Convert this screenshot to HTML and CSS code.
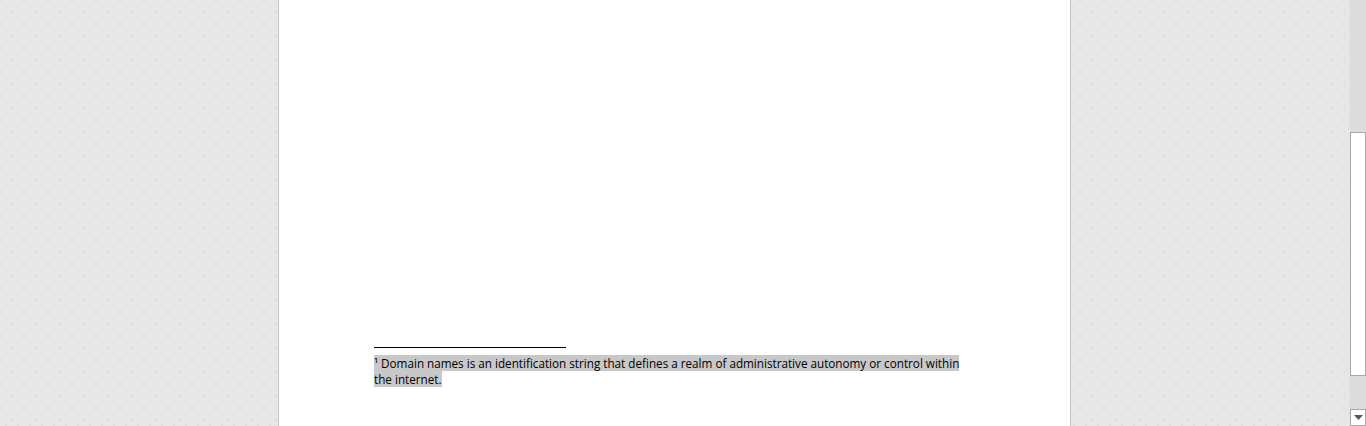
FILE: index.html
```html
<!DOCTYPE html>
<html>
<head>
<meta charset="utf-8">
<link rel="stylesheet" href="styles.css">
</head>
<body>
<div class="workspace">
  <div class="gutter gutter-left"></div>
  <div class="page">
    <div class="footnotes">
      <div class="separator"></div>
      <p class="footnote"><span class="hl">¹ Domain names is an identification string that defines a realm of administrative autonomy or control within the internet.</span></p>
    </div>
  </div>
  <div class="gutter gutter-right"></div>
  <div class="scrollbar">
    <div class="track-top"></div>
    <div class="thumb"></div>
    <div class="track-bottom"></div>
    <div class="btn-down"><svg width="9" height="5" viewBox="0 0 9 5"><path d="M0 0H9L4.5 5Z" fill="#5a5a5a"/></svg></div>
  </div>
</div>
</body>
</html>
```

FILE: styles.css
```css
html, body {
  margin: 0;
  padding: 0;
  height: 426px;
  overflow: hidden;
}
.workspace {
  display: flex;
  height: 426px;
  background-color: #e7e7e7;
  background-image:
    radial-gradient(circle, #dcdcdc 0.7px, transparent 1.1px),
    radial-gradient(circle, #dcdcdc 0.7px, transparent 1.1px);
  background-size: 12px 12px, 12px 12px;
  background-position: 0 0, 6px 6px;
}
.gutter-left {
  width: 278px;
  flex: none;
}
.page {
  flex: none;
  background: #ffffff;
  border-left: 1px solid #c6c6c6;
  border-right: 1px solid #c6c6c6;
  display: flex;
  flex-direction: column;
  justify-content: flex-end;
  padding: 0 100px 39px 95px;
  box-sizing: content-box;
  width: 596px;
}
.footnotes {
  font-family: "Open Sans", "Liberation Sans", sans-serif;
  font-size: 11.7px;
  color: #000;
}
.separator {
  width: 192px;
  height: 1px;
  background: #000;
  margin-bottom: 7px;
}
.footnote {
  margin: 0;
  line-height: 16px;
  width: 596px;
}
.hl {
  background: #c8c8c8;
}
.gutter-right {
  flex: 1;
}
.scrollbar {
  width: 16px;
  flex: none;
  display: flex;
  flex-direction: column;
  background-color: #dcdcdc;
}
.track-top {
  height: 132px;
  flex: none;
}
.thumb {
  height: 244px;
  flex: none;
  background: #ffffff;
  border: 1px solid #a8a8a8;
  box-sizing: border-box;
}
.track-bottom {
  flex: 1;
}
.btn-down {
  height: 17px;
  flex: none;
  background: #ffffff;
  border: 1px solid #a8a8a8;
  box-sizing: border-box;
  display: flex;
  align-items: center;
  justify-content: center;
}
```
